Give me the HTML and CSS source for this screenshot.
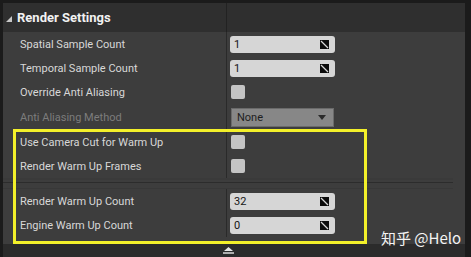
FILE: index.html
```html
<!DOCTYPE html>
<html lang="en">
<head>
    <meta charset="UTF-8">
    <title>Render Settings</title>
    <link rel="stylesheet" href="styles.css">
</head>
<body>

<div class="panel">
    <div class="header">
        <div class="header-name">
            <span class="expander"></span>
            <span>Render Settings</span>
        </div>
        <div class="header-value"></div>
    </div>

    <div class="row">
        <div class="name">Spatial Sample Count</div>
        <div class="value">
            <div class="num-box"><span>1</span><svg class="drag" width="9" height="9" viewBox="0 0 9 9"><path d="M0 0H9V9H0Z" fill="#0a0a0a"/><path d="M1 1L8 8" stroke="#d6d6d6" stroke-width="1.3"/></svg></div>
        </div>
    </div>
    <div class="row">
        <div class="name">Temporal Sample Count</div>
        <div class="value">
            <div class="num-box"><span>1</span><svg class="drag" width="9" height="9" viewBox="0 0 9 9"><path d="M0 0H9V9H0Z" fill="#0a0a0a"/><path d="M1 1L8 8" stroke="#d6d6d6" stroke-width="1.3"/></svg></div>
        </div>
    </div>
    <div class="row">
        <div class="name">Override Anti Aliasing</div>
        <div class="value"><div class="check"></div></div>
    </div>
    <div class="row row-tall">
        <div class="name disabled">Anti Aliasing Method</div>
        <div class="value">
            <div class="combo"><span>None</span><svg width="8" height="5" viewBox="0 0 8 5"><path d="M0 0H8L4 5Z" fill="#2a2a2a"/></svg></div>
        </div>
    </div>
    <div class="row">
        <div class="name">Use Camera Cut for Warm Up</div>
        <div class="value"><div class="check"></div></div>
    </div>
    <div class="row">
        <div class="name">Render Warm Up Frames</div>
        <div class="value"><div class="check"></div></div>
    </div>

    <div class="separator"></div>

    <div class="row">
        <div class="name">Render Warm Up Count</div>
        <div class="value">
            <div class="num-box"><span>32</span><svg class="drag" width="9" height="9" viewBox="0 0 9 9"><path d="M0 0H9V9H0Z" fill="#0a0a0a"/><path d="M1 1L8 8" stroke="#d6d6d6" stroke-width="1.3"/></svg></div>
        </div>
    </div>
    <div class="row">
        <div class="name">Engine Warm Up Count</div>
        <div class="value">
            <div class="num-box"><span>0</span><svg class="drag" width="9" height="9" viewBox="0 0 9 9"><path d="M0 0H9V9H0Z" fill="#0a0a0a"/><path d="M1 1L8 8" stroke="#d6d6d6" stroke-width="1.3"/></svg></div>
        </div>
    </div>
    <div class="row-end"></div>

    <div class="footer">
        <svg width="13" height="7" viewBox="0 0 13 7"><path d="M6.5 0L11 4H2Z" fill="#e6e6e6"/><path d="M1 6H12" stroke="#e6e6e6" stroke-width="1.4"/></svg>
    </div>

    <!-- annotation box and watermark drawn on top of the panel -->
    <div class="highlight"></div>
    <div class="watermark">知乎 @Helo</div>
</div>

</body>
</html>
```

FILE: styles.css
```css
body {
    margin: 0;
    background-color: #1b1b1b;
    font-family: Roboto, "Noto Sans", sans-serif;
    font-size: 11px;
    color: #d8d8d8;
}

.panel {
    position: relative;
    width: 462px;
    height: 254px;
    margin: 3px 0 0 3px;
    background-color: #3d3d3d;
}

.header {
    display: flex;
    height: 29px;
    background-color: #2f2f2f;
}

.header-name {
    width: 223px;
    display: flex;
    align-items: center;
    gap: 5px;
    padding-left: 3px;
    box-sizing: border-box;
    font-size: 13px;
    font-weight: bold;
    color: #f2f2f2;
}

.expander {
    width: 0;
    height: 0;
    border-left: 6px solid transparent;
    border-bottom: 6px solid #c8c8c8;
    margin-top: 2px;
}

.header-value {
    flex: 1;
    border-left: 1px solid #222;
}

.row {
    display: flex;
    height: 24px;
}

.row-tall {
    height: 26px;
}

.name {
    width: 223px;
    display: flex;
    align-items: center;
    padding-left: 17px;
    box-sizing: border-box;
}

.name.disabled {
    color: #7c7c7c;
}

.value {
    flex: 1;
    display: flex;
    align-items: center;
    padding-left: 3px;
    border-left: 1px solid #2a2a2a;
}

.num-box {
    width: 105px;
    height: 17px;
    display: flex;
    align-items: center;
    justify-content: space-between;
    padding: 0 6px 0 4px;
    box-sizing: border-box;
    background-color: #d6d6d6;
    border-radius: 3px;
    color: #151515;
}

.check {
    width: 14px;
    height: 14px;
    margin-left: 1px;
    background-color: #c4c4c4;
    border-radius: 2px;
}

.combo {
    width: 103px;
    height: 19px;
    margin-left: 1px;
    display: flex;
    align-items: center;
    justify-content: space-between;
    padding: 0 7px 0 5px;
    box-sizing: border-box;
    background-color: #878787;
    border: 1px solid #6a6a6a;
    color: #1e1e1e;
}

.separator {
    height: 11px;
    margin-right: 12px;
    box-sizing: border-box;
    border-top: 2px solid #3a3a3a;
    border-bottom: 1px solid #383838;
    background: linear-gradient(#3d3d3d 0, #3d3d3d 2px, #2c2c2c 2px, #2c2c2c 3px, #3d3d3d 3px);
}

.row-end {
    height: 7px;
}

.footer {
    height: 13px;
    background-color: #2b2b2b;
    padding-left: 219px;
    padding-top: 3px;
    box-sizing: border-box;
}

.footer svg {
    display: block;
}

.highlight {
    position: absolute;
    left: 10px;
    top: 126px;
    width: 354px;
    height: 115px;
    box-sizing: border-box;
    border: 3px solid #f3f02a;
}

.watermark {
    position: absolute;
    left: 378px;
    top: 224px;
    font-family: "Noto Sans CJK SC", "Noto Sans", sans-serif;
    font-size: 15px;
    color: #f4f4f4;
}
```
